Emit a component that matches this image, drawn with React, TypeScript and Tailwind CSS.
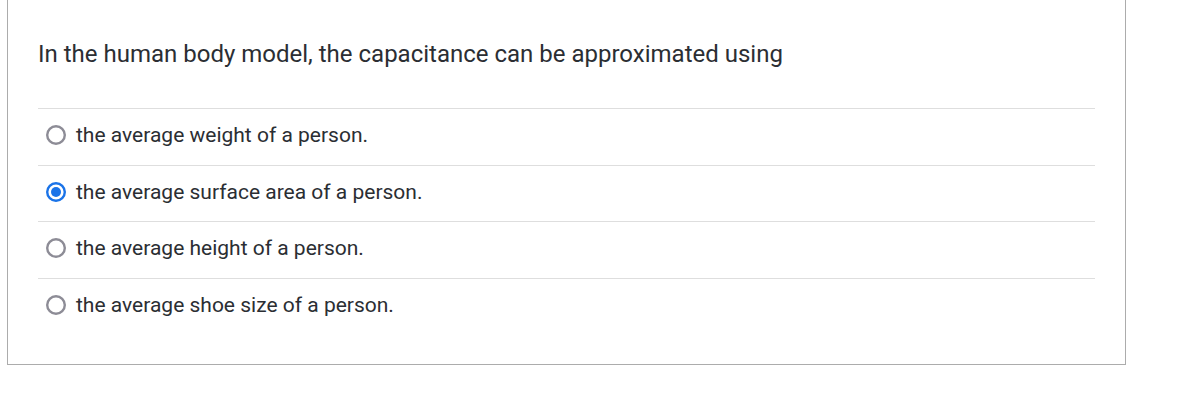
import React from 'react';

const OPTIONS = [
  { label: 'the average weight of a person.', checked: false, h: 'h-[57px]' },
  { label: 'the average surface area of a person.', checked: true, h: 'h-[56px]' },
  { label: 'the average height of a person.', checked: false, h: 'h-[57px]' },
  { label: 'the average shoe size of a person.', checked: false, h: 'h-[56px]' },
];

const Radio = ({ checked }: { checked: boolean }) =>
  checked ? (
    <svg width="20" height="20" viewBox="0 0 20 20">
      <circle cx="10" cy="10" r="8.8" fill="none" stroke="#1a73e8" strokeWidth="2.4" />
      <circle cx="10" cy="10" r="5" fill="#1a73e8" />
    </svg>
  ) : (
    <svg width="20" height="20" viewBox="0 0 20 20">
      <circle cx="10" cy="10" r="8.8" fill="none" stroke="#8d8c96" strokeWidth="2.4" />
    </svg>
  );

export default function App() {
  return (
    <div className="min-h-[408px] bg-white pl-[7px] font-['Roboto',sans-serif]">
      <div className="w-[1119px] border-x border-b border-[#acacac] px-[30px] pb-[30px]">
        <div className="pt-[38px] h-[108px]">
          <h1 className="text-[24px] leading-[32px] text-[#2b2e33]">
            In the human body model, the capacitance can be approximated using
          </h1>
        </div>
        {OPTIONS.map((o) => (
          <label key={o.label} className={`flex items-center gap-[10px] border-t border-[#dedede] pl-[8px] pb-[4px] ${o.h}`}>
            <Radio checked={o.checked} />
            <span className="text-[21px] leading-[26px] text-[#2b2e33]">{o.label}</span>
          </label>
        ))}
      </div>
    </div>
  );
}
